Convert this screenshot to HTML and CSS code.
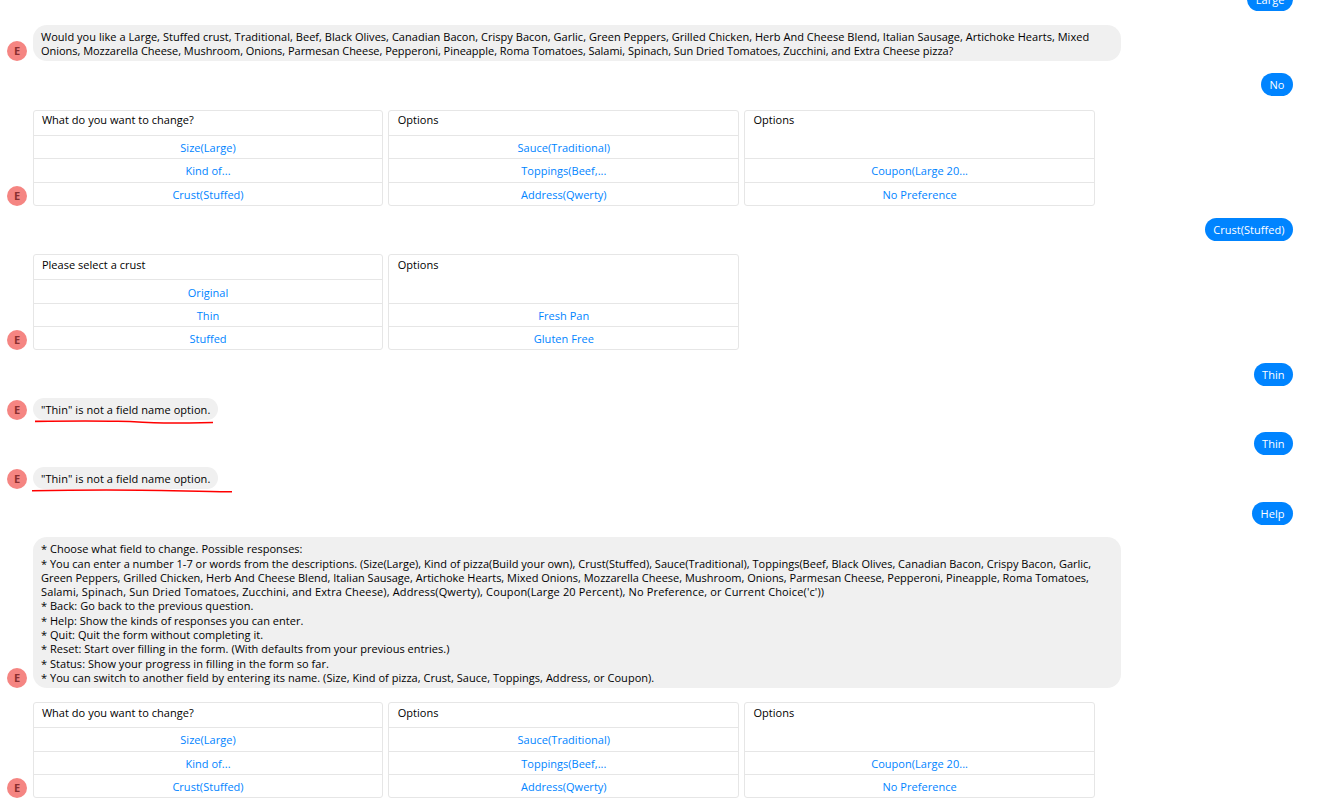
FILE: index.html
```html
<!DOCTYPE html>
<html lang="en">
<head>
<meta charset="utf-8">
<title>Pizza form bot</title>
<link rel="stylesheet" href="styles.css">
</head>
<body>
<main class="chat">
  <div class="row user first"><div class="bubble-user">Large</div></div>

  <div class="row bot gap-14">
    <div class="avatar">E</div>
    <div class="bubble-bot wide">Would you like a Large, Stuffed crust, Traditional, Beef, Black Olives, Canadian Bacon, Crispy Bacon, Garlic, Green Peppers, Grilled Chicken, Herb And Cheese Blend, Italian Sausage, Artichoke Hearts, Mixed<br><span class="line-tight">Onions, Mozzarella Cheese, Mushroom, Onions, Parmesan Cheese, Pepperoni, Pineapple, Roma Tomatoes, Salami, Spinach, Sun Dried Tomatoes, Zucchini, and Extra Cheese pizza?</span></div>
  </div>

  <div class="row user gap-12"><div class="bubble-user">No</div></div>

  <div class="row bot gap-cards-one">
    <div class="avatar">E</div>
    <div class="cards">
      <div class="card">
        <div class="card-title">What do you want to change?</div>
        <a class="choice">Size(Large)</a><a class="choice">Kind of...</a><a class="choice">Crust(Stuffed)</a>
      </div>
      <div class="card">
        <div class="card-title">Options</div>
        <a class="choice">Sauce(Traditional)</a><a class="choice">Toppings(Beef,...</a><a class="choice">Address(Qwerty)</a>
      </div>
      <div class="card">
        <div class="card-title">Options</div>
        <a class="choice">Coupon(Large 20...</a><a class="choice">No Preference</a>
      </div>
    </div>
  </div>

  <div class="row user gap-after-one"><div class="bubble-user">Crust(Stuffed)</div></div>

  <div class="row bot gap-cards-two">
    <div class="avatar">E</div>
    <div class="cards">
      <div class="card">
        <div class="card-title">Please select a crust</div>
        <a class="choice">Original</a><a class="choice">Thin</a><a class="choice">Stuffed</a>
      </div>
      <div class="card">
        <div class="card-title">Options</div>
        <a class="choice">Fresh Pan</a><a class="choice">Gluten Free</a>
      </div>
    </div>
  </div>

  <div class="row user gap-after-two"><div class="bubble-user">Thin</div></div>

  <div class="row bot gap-12">
    <div class="avatar">E</div>
    <div class="bubble-bot short">"Thin" is not a field name option.</div>
    <svg class="scribble scribble-one" width="180" height="5" viewBox="0 0 180 5" aria-hidden="true"><path d="M1 1.4 C30 1 60 .8 84 1.3 S112 3 130 3 S165 2.8 179 2.5" /></svg>
  </div>

  <div class="row user gap-12"><div class="bubble-user">Thin</div></div>

  <div class="row bot gap-12">
    <div class="avatar">E</div>
    <div class="bubble-bot short">"Thin" is not a field name option.</div>
    <svg class="scribble scribble-two" width="202" height="5" viewBox="0 0 202 5" aria-hidden="true"><path d="M1 1.8 C30 1.2 70 .8 110 1.2 S170 2.8 201 2.7" /></svg>
  </div>

  <div class="row user gap-13"><div class="bubble-user">Help</div></div>

  <div class="row bot gap-12">
    <div class="avatar">E</div>
    <div class="bubble-bot wide">* Choose what field to change. Possible responses:<br><span class="line-flat">* You can enter a number 1-7 or words from the descriptions. (Size(Large), Kind of pizza(Build your own), Crust(Stuffed), Sauce(Traditional), Toppings(Beef, Black Olives, Canadian Bacon, Crispy Bacon, Garlic,</span><br><span class="line-flat">Green Peppers, Grilled Chicken, Herb And Cheese Blend, Italian Sausage, Artichoke Hearts, Mixed Onions, Mozzarella Cheese, Mushroom, Onions, Parmesan Cheese, Pepperoni, Pineapple, Roma Tomatoes,</span><br><span class="line-wide">Salami, Spinach, Sun Dried Tomatoes, Zucchini, and Extra Cheese), Address(Qwerty), Coupon(Large 20 Percent), No Preference, or Current Choice('c'))</span><br>* Back: Go back to the previous question.<br>* Help: Show the kinds of responses you can enter.<br>* Quit: Quit the form without completing it.<br>* Reset: Start over filling in the form. (With defaults from your previous entries.)<br>* Status: Show your progress in filling in the form so far.<br>* You can switch to another field by entering its name. (Size, Kind of pizza, Crust, Sauce, Toppings, Address, or Coupon).</div>
  </div>

  <div class="row bot gap-cards-three">
    <div class="avatar">E</div>
    <div class="cards">
      <div class="card">
        <div class="card-title">What do you want to change?</div>
        <a class="choice">Size(Large)</a><a class="choice">Kind of...</a><a class="choice">Crust(Stuffed)</a>
      </div>
      <div class="card">
        <div class="card-title">Options</div>
        <a class="choice">Sauce(Traditional)</a><a class="choice">Toppings(Beef,...</a><a class="choice">Address(Qwerty)</a>
      </div>
      <div class="card">
        <div class="card-title">Options</div>
        <a class="choice">Coupon(Large 20...</a><a class="choice">No Preference</a>
      </div>
    </div>
  </div>
</main>
</body>
</html>
```
FILE: styles.css
```css
* { box-sizing: border-box; }
html, body { margin: 0; height: 100%; overflow: hidden; background: #fff; }
body {
  font-family: "Open Sans", "Noto Sans", sans-serif;
  font-size: 11px;
  letter-spacing: 0.03px;
  line-height: 14.3px;
  color: #000;
}
.chat { display: flex; flex-direction: column; padding: 0 31px 0 7px; }
.row { position: relative; display: flex; flex: none; }
.user { justify-content: flex-end; }
.bot { align-items: flex-end; gap: 6px; }
.first { margin-top: -12px; }
.gap-12 { margin-top: 12px; }
.gap-13 { margin-top: 13px; }
.gap-14 { margin-top: 14px; }
.gap-cards-one { margin-top: 13.7px; }
.gap-after-one { margin-top: 12.3px; }
.gap-cards-two { margin-top: 13.15px; }
.gap-after-two { margin-top: 12.85px; }
.gap-cards-three { margin-top: 14.45px; }
.bubble-user {
  background: #0084ff;
  color: #fff;
  border-radius: 12px;
  padding: 5px 8.5px 3px;
  height: 23px;
}
.bubble-bot {
  background: #f0f0f0;
  border-radius: 14px;
  padding: 5px 8px 2.7px;
  white-space: nowrap;
}
.wide { width: 1088px; }
.short { letter-spacing: 0.06px; }
.line-tight { letter-spacing: -0.03px; }
.line-flat { letter-spacing: 0; }
.line-wide { letter-spacing: 0.143px; }
.avatar {
  flex: none;
  width: 20px;
  height: 20px;
  border-radius: 50%;
  background: #f58582;
  color: #8a2f30;
  font-weight: 700;
  font-size: 11px;
  line-height: 20px;
  text-align: center;
}
.cards { display: flex; gap: 5px; margin-left: -0.4px; }
.card {
  width: 350.8px;
  height: 96px;
  display: flex;
  flex-direction: column;
  background: #fff;
  border: 1px solid #e6e6e6;
  border-radius: 3px;
}
.card-title { flex: 1; padding: 2.3px 8.3px 0; }
.choice {
  flex: none;
  height: 23.33px;
  padding-top: 0.1px;
  line-height: 23px;
  border-top: 1px solid #e6e6e6;
  text-align: center;
  color: #0084ff;
}
.scribble { position: absolute; overflow: visible; }
.scribble path { fill: none; stroke: #f00; stroke-width: 1.6; }
.scribble-one { left: 27px; bottom: -5px; }
.scribble-two { left: 24px; bottom: -5px; }
```
